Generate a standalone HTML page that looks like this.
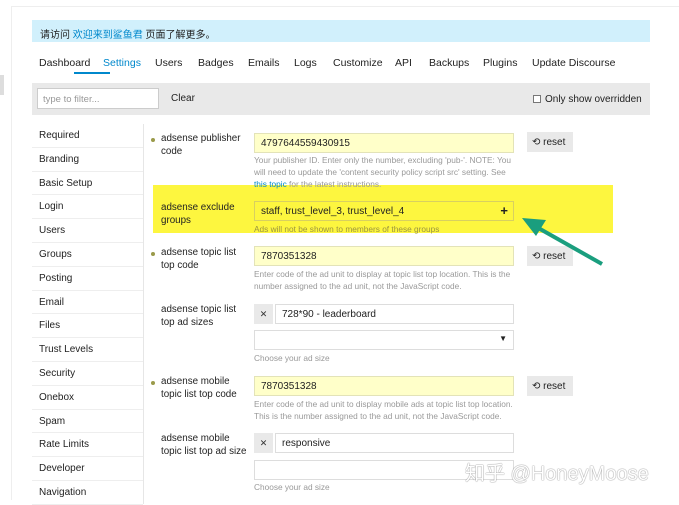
<!DOCTYPE html>
<html><head><meta charset="utf-8"><style>
*{box-sizing:border-box;margin:0;padding:0}
body{width:679px;height:500px;overflow:hidden;background:#fff;font-family:"Liberation Sans","Noto Sans CJK SC",sans-serif;font-size:10px;color:#222;position:relative}
.a{position:absolute}
.banner{left:32px;top:20px;width:618px;height:22px;background:#d1f0fc;padding:6px 8px;font-size:10px}
.banner span{color:#08c}
.tabs{left:32px;top:57px;font-size:10.5px}
.tabs span{position:absolute;white-space:nowrap}
.fbar{left:32px;top:83px;width:618px;height:32px;background:#e9e9e9}
.inp{background:#fff;border:1px solid #ccc}
.side{left:32px;top:124px;width:112px;border-right:1px solid #e6e6e6;height:380px}
.side div{height:23.8px;border-bottom:1px solid #eee;padding:7px 7px;font-size:10px;line-height:10px}
.lbl{left:161px;font-size:9.8px;line-height:13px;width:95px;white-space:nowrap}
.dot{left:151px;width:4px;height:4px;border-radius:50%;background:#9a9a4a}
.box{left:254px;width:260px;height:20px;border:1px solid #ddd;padding:4px 6px;font-size:10px;background:#fff}
.y{background:#ffffc9;border-color:#e3e3b8}
.desc{left:254px;width:265px;font-size:8.3px;color:#999;line-height:12px}
.reset{left:527px;width:46px;height:20px;background:#e9e9e9;font-size:10px;padding:5px 0 0 5px;color:#222}
.x{left:254px;width:19px;height:20px;background:#e9e9e9;font-size:9px;text-align:center;padding-top:5px;color:#333}
</style></head><body>
<div class="a" style="left:11px;top:6px;width:668px;height:1px;background:#eee"></div>
<div class="a" style="left:11px;top:6px;width:1px;height:494px;background:#eee"></div>
<div class="a" style="left:0;top:75px;width:4px;height:20px;background:#ddd"></div>
<div class="a banner">请访问 <span>欢迎来到鲨鱼君</span> 页面了解更多。</div>
<div class="a tabs">
<span style="left:7px">Dashboard</span><span style="left:71px;color:#08c">Settings</span><span style="left:123px">Users</span><span style="left:166px">Badges</span><span style="left:216px">Emails</span><span style="left:262px">Logs</span><span style="left:301px">Customize</span><span style="left:363px">API</span><span style="left:397px">Backups</span><span style="left:451px">Plugins</span><span style="left:500px">Update Discourse</span></div>
<div class="a" style="left:74px;top:72px;width:36px;height:2px;background:#08c"></div>
<div class="a fbar"></div>
<div class="a inp" style="left:37px;top:88px;width:122px;height:21px;padding:5px 5px;color:#999;font-size:9.5px">type to filter...</div>
<div class="a" style="left:171px;top:93px;font-size:10px">Clear</div>
<div class="a" style="left:533px;top:95px;width:8px;height:8px;border:1px solid #777;background:#fff"></div>
<div class="a" style="left:545px;top:94px;font-size:10px">Only show overridden</div>
<div class="a side"><div>Required</div><div>Branding</div><div>Basic Setup</div><div>Login</div><div>Users</div><div>Groups</div><div>Posting</div><div>Email</div><div>Files</div><div>Trust Levels</div><div>Security</div><div>Onebox</div><div>Spam</div><div>Rate Limits</div><div>Developer</div><div>Navigation</div></div>

<div class="a" style="left:153px;top:185px;width:460px;height:48px;background:#fdf63f"></div>

<div class="a dot" style="top:138px"></div>
<div class="a lbl" style="top:132px">adsense publisher<br>code</div>
<div class="a box y" style="top:133px">4797644559430915</div>
<div class="a reset" style="top:132px">⟲ reset</div>
<div class="a desc" style="top:154px">Your publisher ID. Enter only the number, excluding 'pub-'. NOTE: You will need to update the 'content security policy script src' setting. See <span style="color:#08c">this topic</span> for the latest instructions.</div>

<div class="a lbl" style="top:201px">adsense exclude<br>groups</div>
<div class="a box" style="top:201px;background:#fdf63f;border-color:#d8d060">staff, trust_level_3, trust_level_4<b style="position:absolute;right:5px;top:1px;font-size:13px">+</b></div>
<div class="a desc" style="top:223px;color:#9a9440">Ads will not be shown to members of these groups</div>

<div class="a dot" style="top:252px"></div>
<div class="a lbl" style="top:246px">adsense topic list<br>top code</div>
<div class="a box y" style="top:246px">7870351328</div>
<div class="a reset" style="top:246px">⟲ reset</div>
<div class="a desc" style="top:268px">Enter code of the ad unit to display at topic list top location. This is the number assigned to the ad unit, not the JavaScript code.</div>

<div class="a lbl" style="top:303px">adsense topic list<br>top ad sizes</div>
<div class="a x" style="top:304px">✕</div>
<div class="a box" style="left:275px;width:239px;top:304px">728*90 - leaderboard</div>
<div class="a box" style="top:330px"><span style="position:absolute;right:6px;top:3px;font-size:8px">▼</span></div>
<div class="a desc" style="top:352px">Choose your ad size</div>

<div class="a dot" style="top:381px"></div>
<div class="a lbl" style="top:375px">adsense mobile<br>topic list top code</div>
<div class="a box y" style="top:376px">7870351328</div>
<div class="a reset" style="top:376px">⟲ reset</div>
<div class="a desc" style="top:398px">Enter code of the ad unit to display mobile ads at topic list top location. This is the number assigned to the ad unit, not the JavaScript code.</div>

<div class="a lbl" style="top:432px">adsense mobile<br>topic list top ad size</div>
<div class="a x" style="top:433px">✕</div>
<div class="a box" style="left:275px;width:239px;top:433px">responsive</div>
<div class="a box" style="top:460px"></div>
<div class="a desc" style="top:481px">Choose your ad size</div>

<svg class="a" style="left:0;top:0" width="679" height="500"><line x1="602" y1="264" x2="533" y2="225" stroke="#1a9e7e" stroke-width="4"/><polygon points="522,218 546,220 536,236" fill="#1a9e7e"/></svg>
<div class="a" style="left:465px;top:457px;font-size:20px;color:#fff;text-shadow:0 0 1px #888,0 0 1px #888;white-space:nowrap">知乎 @HoneyMoose</div>
</body></html>
